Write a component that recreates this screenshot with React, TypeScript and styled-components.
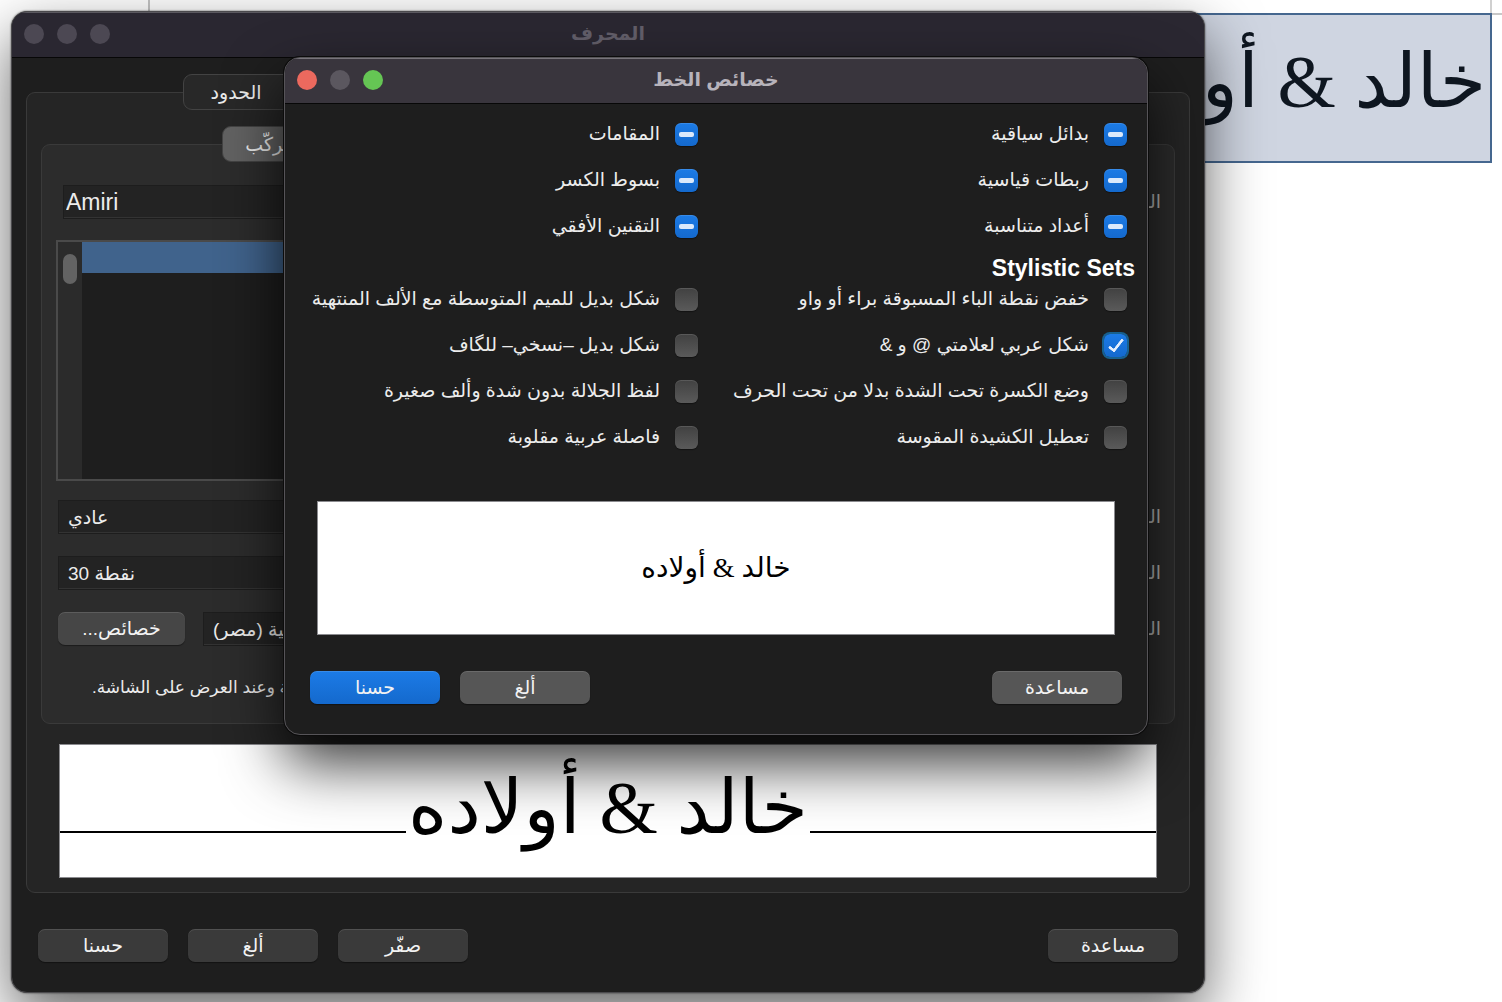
import React, { useEffect, useId, useRef, useState } from "react";
import styled, { createGlobalStyle } from "styled-components";

const GlobalStyle = createGlobalStyle`
  *, *::before, *::after { box-sizing: border-box; }
  body {
    margin: 0;
    background: #fff;
    font-family: "Liberation Sans", "DejaVu Sans", sans-serif;
    -webkit-font-smoothing: antialiased;
  }
  button, input, select { font: inherit; color: inherit; margin: 0; }
`;

const UI_TEXT = "19px";
const LATIN_TEXT = "23px";

const Desktop = styled.main`
  position: relative;
  min-height: 100vh;
  overflow: hidden;
  background: #fff;
`;

const DocumentPage = styled.section`
  display: flex;
  flex-direction: column;
  padding-left: 148px;
`;

const PageMargin = styled.div`
  height: 13px;
  margin-right: 10px;
  border-left: 2px solid #c4c4c4;
  border-right: 2px solid #d0d0d0;
`;

const FrameLine = styled.div`
  display: flex;
`;

const PageEdge = styled.div`
  width: 10px;
  height: 2px;
  background: #c8c8c8;
`;

const TextFrame = styled.div`
  flex: 1;
  min-width: 0;
  height: 150px;
  padding: 0 4px;
  background: #cfd5e1;
  border: 2px solid #45678f;
  color: #0e1620;
  text-align: right;
`;

const Specimen = styled.p<{ $size: number; $line: number }>`
  margin: 0;
  flex: none;
  font-family: "Liberation Serif", "DejaVu Sans", serif;
  font-size: ${(p) => p.$size}px;
  line-height: ${(p) => p.$line}px;
  white-space: nowrap;
`;

const Window = styled.section<{ $active?: boolean }>`
  position: absolute;
  display: flex;
  flex-direction: column;
  border-radius: 16px;
  border: 1px solid ${(p) => (p.$active ? "#565458" : "#4b4a4d")};
  background: #1e1e1e;
  color: #ececec;
  font-size: ${UI_TEXT};
  overflow: hidden;
`;

const CharacterWindow = styled(Window)`
  top: 11px;
  left: 11px;
  right: 297px;
  min-width: 1140px;
  box-shadow: 0 0 2px rgba(0, 0, 0, 0.7), 0 24px 60px rgba(0, 0, 0, 0.6);
`;

const FeaturesWindow = styled(Window)`
  top: 57px;
  left: 284px;
  width: 864px;
  box-shadow: 0 0 0 1px #0c0c0c, 0 28px 60px rgba(0, 0, 0, 0.8);
`;

const TitleBar = styled.header<{ $active?: boolean }>`
  display: grid;
  grid-template-columns: 1fr auto 1fr;
  align-items: center;
  height: 46px;
  padding: 0 12px 2px;
  border-top: 1px solid ${(p) => (p.$active ? "#77747a" : "#5b5960")};
  border-bottom: 1px solid #070707;
  background: ${(p) => (p.$active ? "#39353d" : "#2a2731")};
`;

const Title = styled.h1<{ $active?: boolean }>`
  margin: 0;
  font-size: ${UI_TEXT};
  line-height: 24px;
  color: ${(p) => (p.$active ? "#b7b3bb" : "#625e69")};
`;

const Lights = styled.div`
  display: flex;
  gap: 13px;
`;

const Light = styled.button<{ $color: string }>`
  width: 20px;
  height: 20px;
  padding: 0;
  border: 0;
  border-radius: 50%;
  background: ${(p) => p.$color};
`;

const Pane = styled.div<{ $inner?: boolean }>`
  display: flex;
  flex-direction: column;
  border: 1px solid #3a3a3a;
  border-radius: 9px;
  background: ${(p) => (p.$inner ? "#2c2c2c" : "#252525")};
`;

const OuterPane = styled(Pane)`
  margin: 34px 14px 0;
  padding: 0 14px 14px;
`;

const InnerPane = styled(Pane)`
  margin-top: 34px;
  padding: 0 13px 23px 14px;
`;

const Tabs = styled.div<{ $width: number; $selected?: boolean }>`
  display: flex;
  align-self: center;
  width: ${(p) => p.$width}px;
  height: 36px;
  margin-top: -19px;
  border: 1px solid #434343;
  border-radius: 9px;
  background: ${(p) => (p.$selected ? "#626262" : "#282828")};
  overflow: hidden;
`;

const Tab = styled.button<{ $width: number }>`
  width: ${(p) => p.$width}px;
  padding: 0;
  border: 0;
  background: transparent;
  font-size: ${UI_TEXT};
  color: #ececec;
`;

const FormRow = styled.div`
  display: grid;
  grid-template-columns: 140px 1fr;
  direction: rtl;
`;

const RowLabel = styled.label`
  line-height: 34px;
  color: #b4b4b4;
`;

const FontRow = styled(FormRow)`
  margin-top: 23px;
`;

const FontColumn = styled.div`
  display: flex;
  flex-direction: column;
  gap: 21px;
`;

const FieldLine = styled.div<{ $indent: number }>`
  display: flex;
  direction: ltr;
  gap: 18px;
  padding-left: ${(p) => p.$indent}px;
`;

const fieldStyle = `
  flex: 1;
  min-width: 0;
  height: 34px;
  padding: 0 9px;
  border: 1px solid #1d1d1d;
  background: #232323;
  box-shadow: inset 0 -1px 0 #333;
  outline: 0;
  text-align: left;
  direction: rtl;
`;

const TextField = styled.input`
  ${fieldStyle}
`;

const LatinField = styled(TextField)`
  padding: 0 2px;
  font-size: ${LATIN_TEXT};
`;

const SelectField = styled.select`
  ${fieldStyle}
  appearance: none;
  border-radius: 0;
`;

const FontList = styled.div`
  display: flex;
  height: 241px;
  border: 2px solid #4a4a4a;
  background: #1e1e1e;
  direction: ltr;
`;

const ScrollTrack = styled.div`
  width: 24px;
  padding: 12px 5px;
  background: #2b2b2b;
`;

const ScrollThumb = styled.div`
  height: 30px;
  border-radius: 7px;
  background: #636363;
`;

const SelectedFont = styled.div`
  flex: 1;
  height: 31px;
  background: #40638c;
`;

const Fields = styled.div`
  display: flex;
  flex-direction: column;
  gap: 22px;
  margin-top: 19px;
`;

const Note = styled.p`
  margin: 30px 36px 0;
  font-size: 17px;
  line-height: 24px;
  direction: rtl;
  text-align: left;
`;

const Preview = styled.div`
  display: flex;
  align-items: center;
  justify-content: center;
  height: 134px;
  border: 1px solid #8b8b8f;
  background: #fff;
  color: #000;
`;

const BaselinePreview = styled(Preview)`
  align-items: baseline;
  gap: 2px;
  margin: 20px 18px 0;
  &::before, &::after {
    content: "";
    flex: 1;
    height: 2px;
    background: #000;
  }
`;

const FeaturePreview = styled(Preview)`
  margin: 52px 32px 0;
`;

const ButtonRow = styled.footer<{ $dialog?: boolean }>`
  display: flex;
  gap: 20px;
  direction: rtl;
  padding: 36px ${(p) => (p.$dialog ? 25 : 26)}px 30px;
`;

const PushButton = styled.button<{ $tone: "dim" | "lit" | "primary" }>`
  width: 130px;
  height: 33px;
  padding: 0;
  border: 0;
  border-radius: 7px;
  font-size: ${UI_TEXT};
  color: #f2f2f2;
  box-shadow: inset 0 1px 0 rgba(255, 255, 255, 0.12), 0 1px 1px rgba(0, 0, 0, 0.4);
  background: ${(p) =>
    p.$tone === "primary"
      ? "linear-gradient(#1c7be6, #1469cd)"
      : p.$tone === "lit"
        ? "#565656"
        : "#3a3a3a"};
`;

const PropertiesButton = styled(PushButton)`
  width: 127px;
  background: #464646;
`;

const Spacer = styled.span`
  flex: 1;
`;

const OptionGrid = styled.div`
  display: grid;
  grid-template-columns: 429px 1fr;
  row-gap: 22px;
  direction: rtl;
  padding: 0 20px;
`;

const FirstOptions = styled(OptionGrid)`
  padding-top: 18px;
`;

const OptionLabel = styled.label`
  display: flex;
  align-items: center;
  gap: 15px;
  height: 24px;
  line-height: 24px;
  white-space: nowrap;
`;

const CheckBox = styled.input`
  position: relative;
  flex: none;
  appearance: none;
  width: 23px;
  height: 23px;
  border-radius: 6px;
  background: linear-gradient(#414141, #5a5a5a);
  box-shadow: inset 0 1px 0 rgba(255, 255, 255, 0.12), 0 1px 1px rgba(0, 0, 0, 0.4);
  &:checked, &:indeterminate {
    background: linear-gradient(#1c7be6, #1469cd);
  }
  &:checked {
    box-shadow: 0 0 0 2px #17618f;
  }
  &:indeterminate::after {
    content: "";
    position: absolute;
    left: 4px;
    top: 9px;
    width: 15px;
    height: 5px;
    border-radius: 2px;
    background: #dbe9fb;
  }
  &:checked::after {
    content: "";
    position: absolute;
    left: 8px;
    top: 2px;
    width: 8px;
    height: 16px;
    border: solid #e6f0fd;
    border-width: 0 3px 3px 0;
    border-radius: 1px;
    transform: rotate(38deg);
  }
`;

const SetsHeading = styled.h2`
  margin: 17px 12px 6px;
  font-size: ${LATIN_TEXT};
  line-height: 26px;
  color: #fff;
  text-align: right;
`;

type OptionState = "mixed" | "on" | "off";

function Option({ text, state }: { text: string; state: OptionState }) {
  const box = useRef<HTMLInputElement>(null);
  const [checked, setChecked] = useState(state === "on");
  useEffect(() => {
    if (box.current) box.current.indeterminate = state === "mixed";
  }, [state]);
  return (
    <OptionLabel>
      <CheckBox
        ref={box}
        type="checkbox"
        checked={checked}
        onChange={(e) => setChecked(e.target.checked)}
      />
      <span>{text}</span>
    </OptionLabel>
  );
}

const features = [
  "بدائل سياقية",
  "المقامات",
  "ربطات قياسية",
  "بسوط الكسر",
  "أعداد متناسبة",
  "التقنين الأفقي",
];

const stylisticSets = [
  "خفض نقطة الباء المسبوقة براء أو واو",
  "شكل بديل للميم المتوسطة مع الألف المنتهية",
  "شكل عربي لعلامتي @ و &",
  "شكل بديل –نسخي– للگاف",
  "وضع الكسرة تحت الشدة بدلا من تحت الحرف",
  "لفظ الجلالة بدون شدة وألف صغيرة",
  "تعطيل الكشيدة المقوسة",
  "فاصلة عربية مقلوبة",
];

const SPECIMEN = "خالد & أولاده";

function WindowBar({ title, colors, active }: { title: string; colors: string[]; active?: boolean }) {
  const names = ["إغلاق", "تصغير", "تكبير"];
  return (
    <TitleBar $active={active}>
      <Lights>
        {colors.map((c, i) => (
          <Light key={names[i]} $color={c} aria-label={names[i]} />
        ))}
      </Lights>
      <Title $active={active}>{title}</Title>
    </TitleBar>
  );
}

export default function App() {
  const id = useId();
  return (
    <Desktop lang="ar">
      <GlobalStyle />
      <DocumentPage>
        <PageMargin />
        <FrameLine>
          <TextFrame>
            <Specimen dir="rtl" $size={75} $line={134}>{SPECIMEN}</Specimen>
          </TextFrame>
          <PageEdge />
        </FrameLine>
      </DocumentPage>

      <CharacterWindow>
        <WindowBar title="المحرف" colors={["#4c4853", "#4c4853", "#4c4853"]} />
        <OuterPane>
          <Tabs $width={850}>
            <Tab $width={104}>الحدود</Tab>
          </Tabs>
          <InnerPane $inner>
            <Tabs $width={774} $selected>
              <Tab $width={94}>مركّب</Tab>
            </Tabs>
            <FontRow>
              <RowLabel htmlFor={id + "font"}>الخط:</RowLabel>
              <FontColumn>
                <FieldLine $indent={7}>
                  <LatinField id={id + "font"} defaultValue="Amiri" />
                </FieldLine>
                <FontList>
                  <ScrollTrack>
                    <ScrollThumb />
                  </ScrollTrack>
                  <SelectedFont />
                </FontList>
              </FontColumn>
            </FontRow>
            <Fields>
              <FormRow>
                <RowLabel htmlFor={id + "style"}>النمط:</RowLabel>
                <FieldLine $indent={2}>
                  <TextField id={id + "style"} defaultValue="عادي" />
                </FieldLine>
              </FormRow>
              <FormRow>
                <RowLabel htmlFor={id + "size"}>الحجم:</RowLabel>
                <FieldLine $indent={2}>
                  <TextField id={id + "size"} defaultValue="نقطة 30" />
                </FieldLine>
              </FormRow>
              <FormRow>
                <RowLabel htmlFor={id + "lang"}>اللغة:</RowLabel>
                <FieldLine $indent={2}>
                  <PropertiesButton $tone="dim" dir="rtl">خصائص...</PropertiesButton>
                  <SelectField id={id + "lang"}>
                    <option>العربية (مصر)</option>
                  </SelectField>
                </FieldLine>
              </FormRow>
            </Fields>
            <Note>الطابعة وعند العرض على الشاشة.</Note>
          </InnerPane>
          <BaselinePreview>
            <Specimen dir="rtl" $size={75} $line={126}>{SPECIMEN}</Specimen>
          </BaselinePreview>
        </OuterPane>
        <ButtonRow>
          <PushButton $tone="dim">مساعدة</PushButton>
          <Spacer />
          <PushButton $tone="dim">صفّر</PushButton>
          <PushButton $tone="dim">ألغ</PushButton>
          <PushButton $tone="dim">حسنا</PushButton>
        </ButtonRow>
      </CharacterWindow>

      <FeaturesWindow $active role="dialog">
        <WindowBar active title="خصائص الخط" colors={["#ec695e", "#5b575f", "#65c554"]} />
        <FirstOptions>
          {features.map((t) => (
            <Option key={t} text={t} state="mixed" />
          ))}
        </FirstOptions>
        <SetsHeading>Stylistic Sets</SetsHeading>
        <OptionGrid>
          {stylisticSets.map((t, i) => (
            <Option key={t} text={t} state={i === 2 ? "on" : "off"} />
          ))}
        </OptionGrid>
        <FeaturePreview>
          <Specimen dir="rtl" $size={28} $line={60}>{SPECIMEN}</Specimen>
        </FeaturePreview>
        <ButtonRow $dialog>
          <PushButton $tone="lit">مساعدة</PushButton>
          <Spacer />
          <PushButton $tone="lit">ألغ</PushButton>
          <PushButton $tone="primary">حسنا</PushButton>
        </ButtonRow>
      </FeaturesWindow>
    </Desktop>
  );
}
